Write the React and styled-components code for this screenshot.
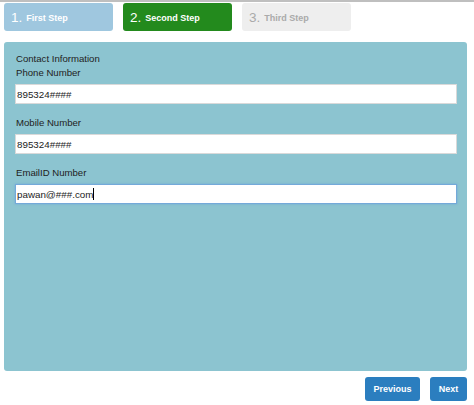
import React, { useEffect, useRef } from "react";
import styled, { createGlobalStyle } from "styled-components";

const Global = createGlobalStyle`
  html, body { margin: 0; padding: 0; background: #ffffff; }
  body { font-family: "Liberation Sans", Arial, sans-serif; }
  * { box-sizing: border-box; }
`;

const Page = styled.div`
  width: 474px;
  height: 405px;
  border-top: 2px solid #bfbfbf;
  display: flex;
  flex-direction: column;
  padding: 1px 7px 0 4px;
`;

const Steps = styled.div`
  display: flex;
  gap: 10px;
  height: 28px;
`;

const tabColors = {
  done: { bg: "#9fc7df", fg: "#ffffff" },
  active: { bg: "#238a1d", fg: "#ffffff" },
  todo: { bg: "#eeeeee", fg: "#aaaaaa" },
};

const Step = styled.div`
  width: 109px;
  height: 28px;
  border-radius: 3px;
  background: ${(p) => tabColors[p.$state].bg};
  color: ${(p) => tabColors[p.$state].fg};
  display: flex;
  align-items: center;
  padding-left: 7px;
  white-space: nowrap;
`;

const StepNum = styled.span`
  font-size: 13.5px;
  margin-right: 4px;
`;

const StepName = styled.span`
  font-size: 9px;
  font-weight: bold;
  padding-top: 2px;
`;

const Panel = styled.div`
  margin-top: 11px;
  height: 329px;
  background: #8cc4d0;
  border-radius: 3px;
  padding: 10px 10px 0 11px;
  display: flex;
  flex-direction: column;
`;

const Label = styled.div`
  font-size: 9.6px;
  line-height: 14px;
  color: #222222;
  padding-left: 1px;
`;

const FieldWrap = styled.div`
  position: relative;
  margin: 4px 0 12px;
`;

const Field = styled.input`
  display: block;
  width: 100%;
  height: 20px;
  margin: 0;
  padding: 0 1px;
  border: 1px solid ${(p) => (p.$focus ? "#74a9d9" : "#d9d9d9")};
  background: #ffffff;
  font-family: "Liberation Sans", Arial, sans-serif;
  font-size: 9.8px;
  color: #222222;
  outline: none;
  caret-color: #000;
  box-shadow: ${(p) => (p.$focus ? "0 0 2px rgba(90,150,220,0.6)" : "none")};
`;

const CaretLayer = styled.div`
  position: absolute;
  left: 2px;
  top: 0;
  height: 20px;
  display: flex;
  align-items: center;
  pointer-events: none;
  font-family: "Liberation Sans", Arial, sans-serif;
  font-size: 9.8px;
  white-space: pre;
`;

const Ghost = styled.span`
  visibility: hidden;
`;

const Caret = styled.span`
  display: inline-block;
  width: 1px;
  height: 12px;
  background: #000000;
`;

const Footer = styled.div`
  display: flex;
  justify-content: flex-end;
  gap: 10px;
  margin-top: 6px;
`;

const Button = styled.button`
  height: 24px;
  width: ${(p) => p.$w}px;
  border: none;
  border-radius: 3px;
  background: #2b7ebf;
  color: #ffffff;
  font-family: "Liberation Sans", Arial, sans-serif;
  font-size: 9px;
  font-weight: bold;
  padding: 0;
  cursor: pointer;
`;

const EMAIL = "pawan@###.com";

export default function App() {
  const emailRef = useRef(null);
  useEffect(() => {
    const el = emailRef.current;
    if (el) {
      el.focus();
      const n = el.value.length;
      el.setSelectionRange(n, n);
    }
  }, []);

  return (
    <>
      <Global />
      <Page>
        <Steps>
          <Step $state="done">
            <StepNum>1.</StepNum>
            <StepName>First Step</StepName>
          </Step>
          <Step $state="active">
            <StepNum>2.</StepNum>
            <StepName>Second Step</StepName>
          </Step>
          <Step $state="todo">
            <StepNum>3.</StepNum>
            <StepName>Third Step</StepName>
          </Step>
        </Steps>
        <Panel>
          <Label>Contact Information</Label>
          <Label>Phone Number</Label>
          <FieldWrap>
            <Field defaultValue="895324####" />
          </FieldWrap>
          <Label>Mobile Number</Label>
          <FieldWrap>
            <Field defaultValue="895324####" />
          </FieldWrap>
          <Label>EmailID Number</Label>
          <FieldWrap>
            <Field ref={emailRef} $focus defaultValue={EMAIL} />
            <CaretLayer>
              <Ghost>{EMAIL}</Ghost>
              <Caret />
            </CaretLayer>
          </FieldWrap>
        </Panel>
        <Footer>
          <Button $w={55}>Previous</Button>
          <Button $w={37}>Next</Button>
        </Footer>
      </Page>
    </>
  );
}
